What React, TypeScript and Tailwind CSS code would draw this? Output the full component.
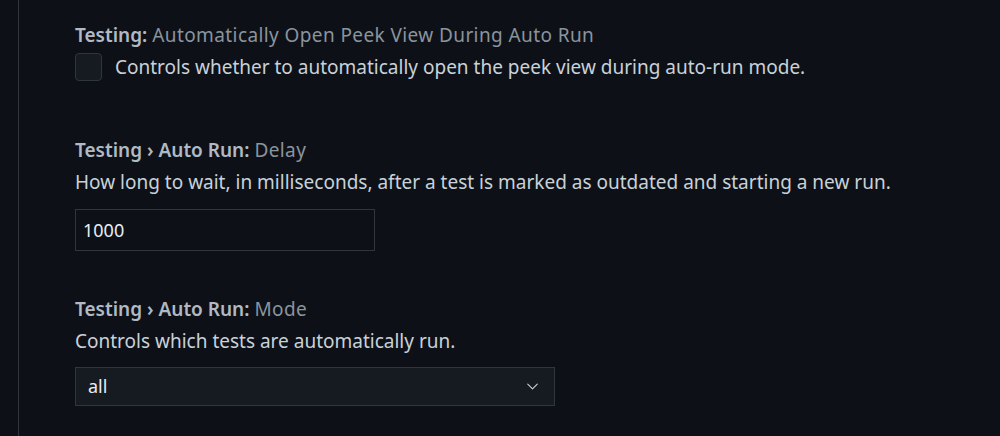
import { ChevronDown } from 'lucide-react'

function SettingTitle({ category, name }: { category: string; name: string }) {
  return (
    <div className="text-[19px] leading-[26px]">
      <span className="font-semibold text-[#b1bac4]">{category}</span>{' '}
      <span className="text-[#8b949e] tracking-[0.4px]">{name}</span>
    </div>
  )
}

export default function App() {
  return (
    <div
      className="w-[1000px] h-[436px] bg-[#0d1117] flex overflow-hidden"
      style={{ fontFamily: '"Noto Sans", "Open Sans", sans-serif' }}
    >
      <div className="w-[18px] shrink-0" />
      <div className="w-px shrink-0 bg-[#30363d]" />
      <div className="flex-1 pl-[56px] pt-[22px] text-[#c9d1d9]">
        <section>
          <SettingTitle category="Testing:" name="Automatically Open Peek View During Auto Run" />
          <label className="flex items-center gap-[13px] mt-[5px] h-[28px]">
            <span className="w-[27px] h-[28px] rounded-[4px] border border-[#30363d] bg-[#161b22]" />
            <span className="text-[19px] leading-[26px]">
              Controls whether to automatically open the peek view during auto-run mode.
            </span>
          </label>
        </section>

        <section className="mt-[56px]">
          <SettingTitle category="Testing › Auto Run:" name="Delay" />
          <p className="text-[19px] leading-[26px] mt-[6px]">
            How long to wait, in milliseconds, after a test is marked as outdated and starting a new run.
          </p>
          <div className="mt-[14px] w-[300px] h-[42px] border border-[#30363d] bg-[#0d1117] flex items-center px-[7px] text-[18px] text-[#e6edf3]">
            1000
          </div>
        </section>

        <section className="mt-[45px]">
          <SettingTitle category="Testing › Auto Run:" name="Mode" />
          <p className="text-[19px] leading-[26px] mt-[6px]">Controls which tests are automatically run.</p>
          <div className="mt-[13px] w-[480px] h-[39px] border border-[#30363d] bg-[#161b22] flex items-center justify-between pl-[12px] pr-[12px] text-[18px] text-[#e6edf3]">
            <span>all</span>
            <ChevronDown size={19} strokeWidth={1.4} className="text-[#c9d1d9]" />
          </div>
        </section>
      </div>
    </div>
  )
}
